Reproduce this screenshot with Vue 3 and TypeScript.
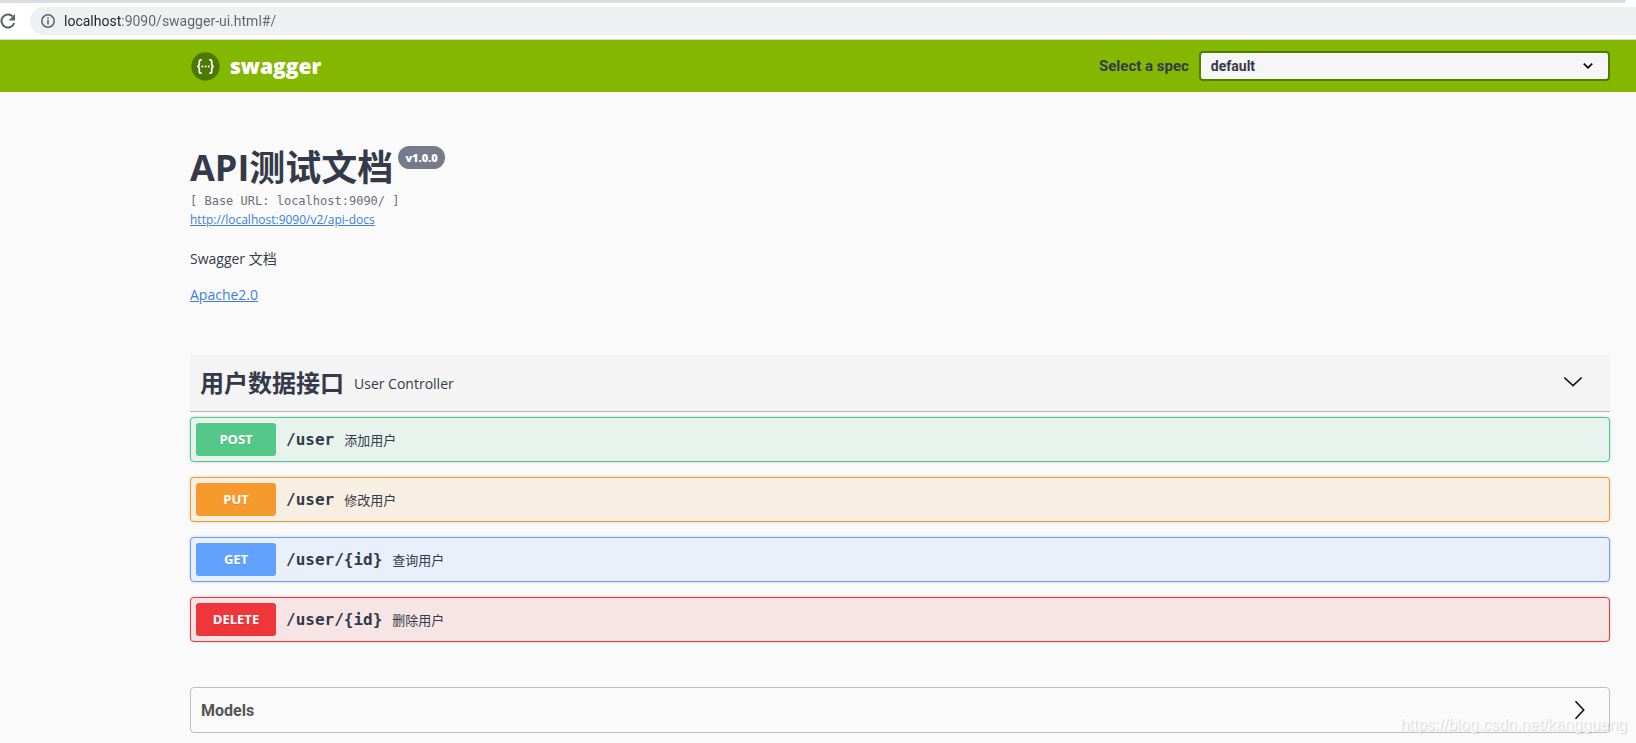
<script setup lang="ts">
import { ref } from 'vue'

interface Operation {
  method: string
  path: string
  summary: string
}

const address = ref('localhost:9090/swagger-ui.html#/')
const spec = ref('default')

const operations: Operation[] = [
  { method: 'POST', path: '/user', summary: '添加用户' },
  { method: 'PUT', path: '/user', summary: '修改用户' },
  { method: 'GET', path: '/user/{id}', summary: '查询用户' },
  { method: 'DELETE', path: '/user/{id}', summary: '删除用户' },
]
</script>

<template>
  <div class="page">
    <div class="browser">
      <div class="tab-strip"></div>
      <div class="toolbar">
        <button class="reload" type="button" aria-label="Reload">
          <svg width="16" height="16" viewBox="0 0 16 16">
            <path d="M12.6 3.4A6.5 6.5 0 1 0 14.2 10" fill="none" stroke="#5f6368" stroke-width="2" />
            <path d="M15 1v6.4H8.6z" fill="#5f6368" />
          </svg>
        </button>
        <div class="omnibox">
          <svg width="14" height="14" viewBox="0 0 14 14">
            <circle cx="7" cy="7" r="6.2" fill="none" stroke="#5f6368" stroke-width="1.5" />
            <path d="M7 6v4.4M7 3.4v1.6" stroke="#5f6368" stroke-width="1.6" />
          </svg>
          <input v-model="address" class="address" type="text" aria-label="Address" />
        </div>
      </div>
    </div>

    <header class="topbar">
      <a class="brand" href="#/">
        <svg width="30" height="30" viewBox="0 0 30 30">
          <circle cx="15.500" cy="15.500" r="14.2" fill="#4b7902" />
          <g transform="translate(.5 .5)" fill="none" stroke="#fff" stroke-width="1.700">
            <path d="M11.200 8.300h-.8q-1.600 0-1.600 1.800v2.500q0 2.200-2 2.400q2 .2 2 2.400v2.500q0 1.800 1.600 1.800h.8" />
            <path d="M18.800 8.300h.8q1.600 0 1.600 1.800v2.500q0 2.200 2 2.400q-2 .2-2 2.400v2.500q0 1.800-1.600 1.800h-.8" />
          </g>
          <g fill="#fff">
            <circle cx="12.300" cy="15.500" r="1" />
            <circle cx="15.500" cy="15.500" r="1" />
            <circle cx="18.700" cy="15.500" r="1" />
          </g>
        </svg>
        <span class="brand-name">swagger</span>
      </a>
      <div class="spec">
        <label for="spec-select">Select a spec</label>
        <div class="select-box">
          <select id="spec-select" v-model="spec">
            <option value="default">default</option>
          </select>
          <svg class="select-arrow" width="12" height="8" viewBox="0 0 12 8">
            <path d="M1.800 1.600L6 5.800l4.200-4.200" fill="none" stroke="#000" stroke-width="1.700" />
          </svg>
        </div>
      </div>
    </header>

    <main class="content">
      <section class="info">
        <div class="heading">
          <h1>API测试文档</h1>
          <span class="version">v1.0.0</span>
        </div>
        <pre class="base-url">[ Base URL: localhost:9090/ ]</pre>
        <a class="docs" href="#/v2/api-docs">http://localhost:9090/v2/api-docs</a>
        <p class="description">Swagger 文档</p>
        <a class="license" href="#/license">Apache2.0</a>
      </section>

      <section class="tag-section">
        <button class="tag" type="button" aria-expanded="true">
          <span class="tag-name">用户数据接口</span>
          <span class="tag-description">User Controller</span>
          <svg width="20" height="20" viewBox="0 0 20 20">
            <path d="M1.300 4.500L10 12.700l8.700-8.200" fill="none" stroke="#111" stroke-width="1.600" />
          </svg>
        </button>
        <div class="operations">
          <button
            v-for="op in operations"
            :key="op.method"
            type="button"
            class="operation"
            :class="op.method.toLowerCase()"
          >
            <span class="method">{{ op.method }}</span>
            <span class="path">{{ op.path }}</span>
            <span class="summary">{{ op.summary }}</span>
          </button>
        </div>
      </section>

      <button class="models" type="button" aria-expanded="false">
        <span>Models</span>
        <svg width="20" height="20" viewBox="0 0 20 20">
          <path d="M5.500 1.300L13.700 10l-8.200 8.700" fill="none" stroke="#111" stroke-width="1.600" />
        </svg>
      </button>
    </main>
    <div class="watermark">https://blog.csdn.net/kangguang</div>
  </div>
</template>

<style>
html,
body {
  margin: 0;
  background: #fafafa;
}
</style>

<style scoped>
.page {
  position: relative;
  color: #343a4a;
  font-family: "Open Sans", "Noto Sans CJK SC", sans-serif;
  font-size: 14px;
}
.page * {
  box-sizing: border-box;
}
button,
input,
select {
  margin: 0;
  color: inherit;
  font-family: inherit;
}
svg {
  display: block;
  flex: none;
}
.browser {
  background: #fff;
  border-bottom: 1px solid #d5d5d5;
  overflow: hidden;
}
.tab-strip {
  height: 3px;
  margin-right: 10px;
  background: #dcdce2;
  border-bottom-right-radius: 4px;
}
.toolbar {
  display: flex;
  align-items: center;
  height: 36px;
}
.reload {
  width: 30px;
  padding: 0;
  border: 0;
  background: none;
}
.omnibox {
  display: flex;
  flex: 1;
  align-items: center;
  gap: 9px;
  height: 28px;
  padding-left: 11px;
  border-radius: 14px 0 0 14px;
  background: #eff0f2;
}
.address {
  flex: 1;
  padding: 0;
  border: 0;
  outline: 0;
  background: linear-gradient(to right, #202124 57px, #5f6368 57px);
  background-clip: text;
  color: transparent;
  caret-color: #202124;
  font-family: Roboto, sans-serif;
  font-size: 14px;
  line-height: 20px;
}
.topbar {
  display: flex;
  align-items: center;
  justify-content: space-between;
  height: 52px;
  padding: 0 26px 0 190px;
  background: #84b800;
}
.brand {
  display: flex;
  align-items: center;
  gap: 10px;
  color: #fff;
  text-decoration: none;
}
.brand-name {
  font-size: 21px;
  font-weight: 800;
  line-height: 30px;
}
.spec {
  display: flex;
  align-items: center;
  gap: 10px;
  width: 36%;
  min-width: 320px;
  max-width: 511px;
}
.spec label {
  font-family: Roboto, sans-serif;
  font-size: 15px;
  font-weight: 700;
  white-space: nowrap;
}
.select-box {
  position: relative;
  flex: 1;
}
.select-box select {
  display: block;
  width: 100%;
  height: 30px;
  padding: 0 40px 0 10px;
  border: 2px solid #4f7d04;
  border-radius: 4px;
  background: #f6f6f6;
  appearance: none;
  font-family: Roboto, sans-serif;
  font-size: 14px;
  font-weight: 700;
}
.select-arrow {
  position: absolute;
  top: 11px;
  right: 16px;
  pointer-events: none;
}
.content {
  padding: 51px 26px 10px 190px;
}
.info {
  display: flex;
  flex-direction: column;
  align-items: flex-start;
}
.heading {
  display: flex;
  align-items: flex-start;
  gap: 5px;
}
h1 {
  margin: 0;
  font-size: 36px;
  font-weight: 700;
  line-height: 50px;
}
.version {
  margin-top: 3px;
  padding: 0 7px;
  border-radius: 12px;
  background: #757b8b;
  color: #fff;
  font-family: "Open Sans", sans-serif;
  font-size: 11px;
  font-weight: 800;
  line-height: 23px;
}
.base-url {
  margin: 0;
  color: #6b6f7b;
  font-family: "DejaVu Sans Mono", monospace;
  font-size: 12px;
  line-height: 16px;
}
.docs,
.license {
  color: #3b80e0;
}
.docs {
  margin-top: 1px;
  font-size: 12px;
  line-height: 20px;
}
.description {
  margin: 19px 0 16px;
  line-height: 20px;
}
.license {
  line-height: 20px;
}
.tag-section {
  margin-top: 50px;
}
.tag {
  display: flex;
  align-items: center;
  width: 100%;
  height: 57px;
  padding: 0 27px 0 10px;
  border: 0;
  border-bottom: 1px solid #b6b8c1;
  background: #f4f4f4;
  text-align: left;
}
.tag svg {
  margin-left: auto;
}
.tag-name {
  padding-bottom: 4px;
  font-size: 24px;
  font-weight: 700;
}
.tag-description {
  padding-left: 10px;
  font-size: 14px;
}
.operations {
  display: flex;
  flex-direction: column;
  gap: 15px;
  margin-top: 5px;
}
.operation {
  display: flex;
  align-items: center;
  gap: 10px;
  width: 100%;
  padding: 5px;
  border: 1px solid;
  border-radius: 4px;
  box-shadow: 0 0 3px rgba(0, 0, 0, 0.19);
  text-align: left;
}
.method {
  width: 80px;
  border-radius: 3px;
  color: #fff;
  font-family: "Open Sans", sans-serif;
  font-size: 13px;
  font-weight: 700;
  line-height: 33px;
  text-align: center;
  text-shadow: 0 1px 0 rgba(0, 0, 0, 0.1);
}
.path {
  font-family: "DejaVu Sans Mono", monospace;
  font-size: 16px;
  font-weight: 700;
}
.summary {
  font-size: 13px;
}
.operation.post {
  border-color: #49cc90;
  background: #e8f3ed;
}
.post .method {
  background: #53c888;
}
.operation.put {
  border-color: #f79a2e;
  background: #f8efe3;
}
.put .method {
  background: #f79a2e;
}
.operation.get {
  border-color: #61a2fb;
  background: #e9f0fa;
}
.get .method {
  background: #61a2fe;
}
.operation.delete {
  border-color: #ef363a;
  background: #f7e5e5;
}
.delete .method {
  background: #ef363a;
}
.models {
  display: flex;
  align-items: center;
  justify-content: space-between;
  width: 100%;
  height: 46px;
  margin-top: 45px;
  padding: 0 19px 0 10px;
  border: 1px solid #bcbdc1;
  border-radius: 4px;
  background: none;
  color: #555;
  font-family: Roboto, sans-serif;
  font-size: 16px;
  font-weight: 700;
}
.watermark {
  position: absolute;
  right: 9px;
  bottom: 9px;
  color: rgba(255, 255, 255, 0.8);
  font-family: "Liberation Sans", sans-serif;
  font-size: 16px;
  line-height: 18px;
  pointer-events: none;
  text-shadow: 1px 1px 1px rgba(0, 0, 0, 0.16);
}
</style>
